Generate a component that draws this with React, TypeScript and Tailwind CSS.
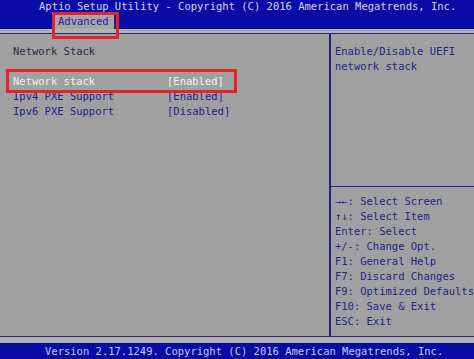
const mono = "font-['DejaVu_Sans_Mono','Liberation_Mono',monospace]";

const helpLines = [
  '→←: Select Screen',
  '↑↓: Select Item',
  'Enter: Select',
  '+/-: Change Opt.',
  'F1: General Help',
  'F7: Discard Changes',
  'F9: Optimized Defaults',
  'F10: Save & Exit',
  'ESC: Exit',
];

export default function App() {
  return (
    <div className={`relative w-[474px] h-[359px] overflow-hidden bg-[#a0a0a0] text-[10.5px] leading-[15px] ${mono}`}>
      {/* Title bar */}
      <div className="h-[29px] bg-[#0b0ba6] flex flex-col">
        <div className="h-[13px] leading-[13px] pl-[39px] text-[#d4d4ec] whitespace-pre">
          Aptio Setup Utility - Copyright (C) 2016 American Megatrends, Inc.
        </div>
        <div className="h-[16px] flex">
          <div className="ml-[55px] w-[61px] bg-[#a6a6a6] border-r-2 border-[#20206a] text-[#1a1aa8] leading-[16px] pl-[3px]">
            Advanced
          </div>
        </div>
      </div>
      <div className="h-[4px] bg-[#b2b2b2]" />
      <div className="h-[1px] bg-[#2a2a6e]" />

      {/* Main */}
      <div className="h-[302px] flex">
        <div className="w-[331px] pt-[10px] pl-[13px] border-r-2 border-[#22228a]">
          <div className="text-[#2c2c40]">Network Stack</div>
          <div className="h-[15px]" />
          <div className="flex text-[#f0f0f0]">
            <span className="w-[154px]">Network stack</span>
            <span>[Enabled]</span>
          </div>
          <div className="flex text-[#20208e]">
            <span className="w-[154px]">Ipv4 PXE Support</span>
            <span>[Enabled]</span>
          </div>
          <div className="flex text-[#20208e]">
            <span className="w-[154px]">Ipv6 PXE Support</span>
            <span>[Disabled]</span>
          </div>
        </div>
        <div className="flex-1 flex flex-col text-[#24248a]">
          <div className="h-[152px] pt-[10px] pl-[4px]">
            <div>Enable/Disable UEFI</div>
            <div>network stack</div>
          </div>
          <div className="h-[1px] bg-[#22228a]" />
          <div className="pt-[7px] pl-[4px] whitespace-pre">
            {helpLines.map((l) => (
              <div key={l}>{l}</div>
            ))}
          </div>
        </div>
      </div>

      <div className="h-[1px] bg-[#2a2a6e]" />
      <div className="h-[6px] bg-[#b0b0b0]" />
      <div className="h-[16px] bg-[#0b0ba6] text-[#c8c8ea] leading-[16px] pl-[45px] whitespace-pre">
        Version 2.17.1249. Copyright (C) 2016 American Megatrends, Inc.
      </div>

      {/* Red highlight boxes */}
      <div className="absolute left-[52px] top-[12px] w-[67px] h-[27px] border-[3px] border-[#e2222c]" />
      <div className="absolute left-[6px] top-[69px] w-[231px] h-[24px] border-[3px] border-[#e2222c]" />
    </div>
  );
}
